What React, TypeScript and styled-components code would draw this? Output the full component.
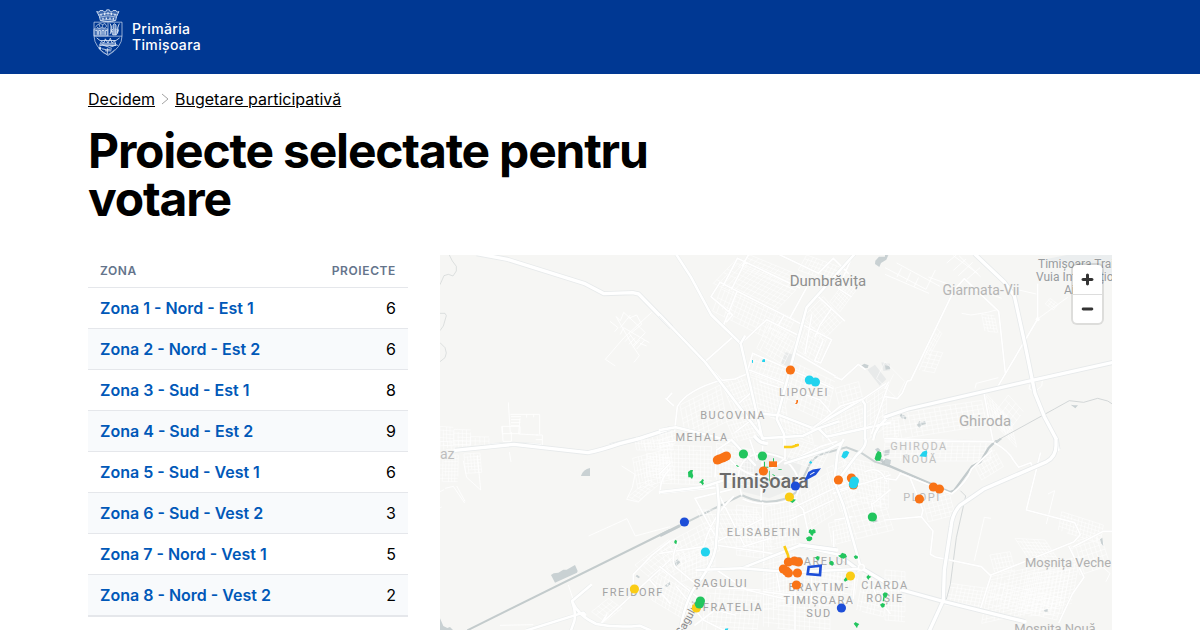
import React from "react";
import styled, { createGlobalStyle } from "styled-components";

const GlobalStyle = createGlobalStyle`
  *, *::before, *::after { box-sizing: border-box; }
  body {
    margin: 0;
    background: #fff;
    color: #000;
    font: 16px/24px Inter, "Liberation Sans", sans-serif;
  }
`;

const Header = styled.header`
  background: #003893;
  padding: 9px 0 18px;
`;

const Container = styled.div`
  width: 100%;
  max-width: 1072px;
  margin: 0 auto;
  padding: 0 24px;
`;

const Brand = styled.a`
  display: inline-flex;
  align-items: center;
  gap: 9px;
  padding-left: 5px;
  height: 47px;
  color: #fff;
  text-decoration: none;
  font-size: 14px;
  line-height: 16px;
  font-weight: 500;
  letter-spacing: 0.025em;
  vertical-align: top;
`;

const BrandName = styled.span`
  display: flex;
  flex-direction: column;
  padding-top: 8px;
`;

const Breadcrumbs = styled.nav`
  display: flex;
  align-items: center;
  gap: 4px;
  padding-top: 13px;
`;

const Crumb = styled.a`
  color: #000;
  text-decoration: underline;
`;

const Title = styled.h1`
  margin: 16px 0 32px;
  max-width: 672px;
  font-size: 48px;
  line-height: 48px;
  font-weight: 700;
  letter-spacing: -0.025em;
`;

const Content = styled.main`
  display: grid;
  grid-template-columns: 320px minmax(0, 1fr);
  gap: 32px;
  align-items: start;
  @media (max-width: 760px) {
    grid-template-columns: minmax(0, 1fr);
  }
`;

const Table = styled.table`
  width: 100%;
  border-spacing: 0;
  border-bottom: 1px solid #e5e7eb;
`;

const HeadCell = styled.th<{ $end?: boolean }>`
  padding: 8px 12px;
  border-bottom: 1px solid #e5e7eb;
  color: #64748b;
  font-size: 12px;
  line-height: 16px;
  font-weight: 600;
  letter-spacing: 0.05em;
  text-transform: uppercase;
  text-align: ${(p) => (p.$end ? "right" : "left")};
`;

const Row = styled.tr`
  &:nth-child(even) { background: #f8fafc; }
`;

const Cell = styled.td<{ $end?: boolean }>`
  padding: 8px 12px;
  border-bottom: 1px solid #e5e7eb;
  text-align: ${(p) => (p.$end ? "right" : "left")};
`;

const ZoneLink = styled.a`
  color: #0058b8;
  font-weight: 600;
  text-decoration: none;
`;

const MapFrame = styled.section`
  position: relative;
  overflow: hidden;
  background: #f6f6f4;
`;

const MapDrawing = styled.svg`
  display: block;
  width: 100%;
  height: auto;
`;

const ZoomControls = styled.div`
  position: absolute;
  top: 10px;
  right: 10px;
  display: flex;
  flex-direction: column;
  border-radius: 4px;
  background: #fff;
  box-shadow: 0 0 0 2px rgba(0, 0, 0, 0.1);
`;

const ZoomButton = styled.button`
  width: 29px;
  height: 29px;
  padding: 0;
  border: 0;
  background: transparent;
  cursor: pointer;
  & + & { border-top: 1px solid #ddd; }
  svg { display: block; width: 100%; height: 100%; }
`;

const Crest = () => (
  <svg width="30" height="47" viewBox="40 28 90 140" fill="none" stroke="#dce7f6" strokeWidth="2.5" aria-hidden="true">
    <path d="M51 35l7 2 3-5h9l3 4h5l3-6h8l3 6h5l3-4h9l3 5 6-2-7 14-3 13-12 3H74l-12-3-3-13z" fill="#88a6d3" fillOpacity=".45" />
    <path d="M55 46q30-10 59 0M58 52q27-8 53 0M62 62q23-6 45 0" strokeWidth="2" />
    <path d="M64 42v6M75 39v7M85 37v7M95 39v7M106 42v6M70 54v6M80 53v6M91 53v6M101 54v6" strokeWidth="4" />
    <path d="M43 67h84v42q0 33-42 58Q44 142 43 109z" strokeWidth="2" />
    <path d="M43 109h84M85 68v41" strokeWidth="2" />
    <path d="M43 87h41v21H43z" fill="#88a6d3" fillOpacity=".5" strokeWidth="2" />
    <path d="M47 92h6v13M57 105V92h6v13M67 105V92h6v13M77 105V92h6" />
    <path d="M47 83l6-8 8-4 8 3 7-3 5 8-6 6-9-2-8 3-6-4M58 73l3 9M70 74l-3 9" strokeWidth="2" />
    <path d="M91 71l5 10v10l-5 12M119 71l-5 12v18M100 76q5-9 9 0v10l7 7-6 12H99l-4-12 6-7z" fill="#c5d5ec" fillOpacity=".5" />
    <path d="M103 86v20M108 86v20M92 90l8 7M118 89l-8 8" />
    <path d="M51 114l10 8h48l11-8M60 135l5-10 8 4 4-12 8 13 7-15 5 15 8-7 4 14zM57 139q12-7 22 0t22 0 14-1M67 147q12 5 30 0M83 145v19M76 153h19" strokeWidth="2.5" />
    <path d="M65 130h43l-3 7H69z" fill="#c5d5ec" fillOpacity=".5" strokeWidth="1.5" />
    <circle cx="61" cy="145" r="3" fill="#dce7f6" />
    <path d="M60 149q10 12 23 15M105 149q-9 11-21 15" strokeWidth="1.5" />
  </svg>
);

/* Map sheets are digitised at three units to the pixel. */
type SheetProps = { x: number; y: number; children: React.ReactNode };
const Sheet = ({ x, y, children }: SheetProps) => (
  <g transform={`translate(${x} ${y}) scale(0.333333)`}>{children}</g>
);

const roadStyle = {
  major: { casing: 15, fill: 10, edge: "#e7eaeb" },
  main: { casing: 11, fill: 7.5, edge: "#ebeeee" },
  minor: { casing: 6.5, fill: 5, edge: "#f0f0ef" },
};

const Road = ({ d, kind = "minor" }: { d: string; kind?: keyof typeof roadStyle }) => (
  <g fill="none" strokeLinejoin="round">
    <path d={d} stroke={roadStyle[kind].edge} strokeWidth={roadStyle[kind].casing} />
    <path d={d} stroke="#fff" strokeWidth={roadStyle[kind].fill} strokeLinecap="round" />
  </g>
);

const Lanes = ({ d }: { d: string }) => <path d={d} fill="none" stroke="#fff" strokeWidth="2.6" />;

type Block = [number, number, number, number, number, number, number, number];

/* A block of streets: origin, two edge vectors and the number of streets along each. */
const Streets = ({ blocks }: { blocks: Block[] }) => {
  const d = blocks
    .map(([x, y, ux, uy, vx, vy, n, m]) => {
      const parts: string[] = [];
      for (let i = 0; i <= n; i++) {
        const a = i % 3 === 1 ? 0.15 : 0;
        const b = i % 4 === 2 ? 0.8 : 1;
        const px = x + (ux * i) / n;
        const py = y + (uy * i) / n;
        parts.push(`M${px + vx * a} ${py + vy * a}L${px + vx * b} ${py + vy * b}`);
      }
      for (let j = 0; j <= m; j++) {
        const a = j % 3 === 2 ? 0.2 : 0;
        const px = x + (vx * j) / m;
        const py = y + (vy * j) / m;
        parts.push(`M${px + ux * a} ${py + uy * a}l${ux * (1 - a)} ${uy * (1 - a)}`);
      }
      return parts.join("");
    })
    .join("");
  return <path d={d} fill="none" stroke="#fff" strokeWidth="2.2" opacity=".75" />;
};

const WATER = "#c9d1d3";

const BaseMap = () => (
  <g>
    <Sheet x={0} y={0}>
      <g fill="none" stroke="#cfd3d3" strokeWidth="2">
        <path d="M28 0l9 18 12 16v14l-10 15-14-5-13 4L0 89M0 175h15l4 7-9 31-10 14M0 263l15 15 4 16-4 14-15 12" />
      </g>
      <Lanes d="M551 172l50 46 15 15-38 39-50-88M510 199l24 19-10 12M551 172l-10 25-12-12M571 180l-30 38M566 190l24-10 15 28-30 25M635 172l-84 77-55 64 30 20M578 272l20 30-16 20M541 238l10-20 77 45M555 260l18-20M567 268l18-20M579 277l20-22M590 282l24-27M600 265l20 8M566 233l24 32" />
      <Lanes d="M205 442l6 94M211 478h88v60M213 485h30M213 494h28M213 503h28M213 512h25M185 514h55v22h-53zM187 516l2 43h25v-28M240 490l-4 47 58 3M287 540h20v30M287 554h20M260 478v10M281 478v9" />
      <Streets blocks={[[0, 514, 40, 3, 0, 56, 4, 5], [42, 523, 50, 2, 0, 46, 4, 4], [92, 545, 55, 1, 0, 25, 4, 2], [606, 545, 84, -23, 12, 45, 6, 2]]} />
      <Road d="M680 432l15-17M678 431l22 20" />
      <Road kind="major" d="M110-4L202 13l230 72 60 31 86-3 18 4 98 100" />
      <Road kind="major" d="M510 572l90-22 90-29" />
      <Road kind="main" d="M150 570q65-6 150 0" />
    </Sheet>

    <Sheet x={220} y={0}>
      <path d="M374 290l28 10-12 38-28-8z" fill="#e8eaea" />
      <path d="M657 5h17l11-5-6 14-16 10-5 12-13-9 1-10z" fill={WATER} />
      <path d="M603 332l10-6 13 5-3 8-15 1zM678 333l12-3v10l-8 2z" fill={WATER} />
      <path d="M622 344l23-15 34 44-20 19zM664 322l26 4v20l-20 2z" fill="#e8eaea" />
      <Streets
        blocks={[
          [232, 10, 185, 85, -72, 75, 16, 7],
          [270, 0, 170, 70, -35, 35, 13, 4],
          [440, 0, 110, 40, -25, 45, 11, 4],
          [188, 88, 160, 80, -30, 80, 14, 6],
          [355, 170, 50, 23, -32, 60, 5, 5],
          [490, 125, 60, 70, -60, 60, 8, 6],
          [432, 200, 70, 45, -30, 80, 8, 6],
          [330, 200, 80, 50, -40, 80, 8, 6],
          [570, 60, 30, 30, -60, 80, 5, 9],
          [278, 300, 105, 35, -20, 55, 9, 4],
          [265, 350, 100, 35, 20, 120, 9, 8],
          [395, 320, 130, 60, -30, 120, 10, 8],
          [60, 450, 120, -60, 20, 110, 9, 8],
          [185, 385, 65, -25, 45, 110, 7, 8],
          [200, 500, 80, -20, 25, 60, 9, 5],
          [480, 500, 125, -50, 10, 60, 10, 5],
          [360, 480, 90, 35, 10, 50, 8, 4],
          [620, 430, 60, -40, 0, 125, 5, 9],
          [525, 400, 70, -20, 15, 60, 5, 4],
          [0, 528, 45, -12, 0, 50, 5, 4],
        ]}
      />
      <Road d="M232 10l186 88M232 10l-42 81M255 22l-40 80M230 112l-40 100M180 82l-27 43 65 55-18 20M180 82l335 172-33 70-18-7 24-58M370 185l-13 22M440 97l-50 92M265 0l-18 32M350-5l125 60M475 55l45-45M520 10l45 45M475 125l78 72M570 20l-35 80 38 25M515 160l-35 50-15 35M220 245L135 320M245 264l75-70 95 47M410 296l135 78M455 180l-20 115M278 295l240 105M278 295l-18 62-35 15M260 342l125 48M300 380l70 22" />
      <Road d="M135 320l50 55q-105 30-133 80l-8 70M225 372l-45 5M300 475l-72 55M270 416l-35 30M545 374l50-46 20 15M480 520l40 50M515 475l-35-40-80-30M545 374l-20-8" />
      <Road kind="main" d="M48-3l44 68 62 115 88 85 66 290M0 180l135 141 176 230M585-4L440 157l-90 335 22 45v33M0 525l47-8 170 42M310 477l50 4 102 40M310 550l120-8 45-22 60-20M455 520l150-87 10 15v120M475 520l25 25 190-42M640 553q5-36 50-72" />
      <Road d="M678 385L607 433l-65 20-85 68M635 535l50-145" />
      <Road kind="main" d="M242 265l12-20" />
    </Sheet>

    <Sheet x={445} y={0}>
      <path d="M550-2l110 40 25 4V0zM455 18h60l80 40h90V42L555-2z" fill="#ebeeef" />
      <path d="M0 331l13 3 3 7-14 3zM44 480l5-4 15 9-1 8-15-4zM96 510l7-12 8 4 10-5 2 10-13 4-7 8zM557 449l10 2 12 0-8 9zM330 561l15-12 7 2-18 15z" fill={WATER} />
      <path d="M0 0h10L0 8z" fill={WATER} />
      <Lanes d="M0 38l123 65 28-58M0 58l132 57M35 24l130 70M50 38l-14 28M77 52l-13 29M101 67l-14 29M130 66l70 25M205 2l75 55M222 2l65 64M185 24l30-25M205 46l38-34M220 62l43-40M240 78l45-40M270 100l80 30M380 100l78 18M230 175l28 5 50-8 28-8" />
      <Streets blocks={[[290, 178, 38, 4, 10, 50, 4, 5], [495, 130, 24, 18, -14, 17, 3, 3], [155, 220, 15, 15, -42, 78, 3, 6], [128, 285, 45, 8, -25, 60, 3, 5], [0, 320, 60, 60, -25, 50, 2, 1], [20, 478, 270, -42, 15, 75, 17, 6], [300, 412, 75, 80, 20, 85, 7, 8], [370, 420, 45, 50, -50, 65, 4, 5], [-5, 500, 45, -5, 0, 50, 4, 5]]} />
      <Road d="M0 425l37 6 15-17 15-36 10-2 130-270 31-35 103 98 20 185M340 392l118-200V88M0 400l10-18" />
      <Lanes d="M458 192l90-65M270 400l4-15 66-17M435 388l-3 13 10 5M472 378l-2 15-14 12" />
      <Road d="M296 410l14 75 15 78M0 551l323 9" />
      <path d="M690 452l-22-14-30-8-42 12-43-5-45 25-182 100" fill="none" stroke="#cbd0d1" strokeWidth="2.5" />
      <Road kind="major" d="M0 486l70-24 372-86 243-54M268-4l90 85 30 42 32 145 30 147 28 70 36 68 5 30" />
      <circle cx="458" cy="193" r="6" fill="#fff" />
    </Sheet>

    <Sheet x={0} y={185}>
      <path d="M424 105q6-16 26-21v24h-27zM333 405l8-5 14-2 15-9h10l25-14 8 18-2 5-66 30z" fill={WATER} />
      <path d="M0 535l10 23 12 6 8-3 10 10H0M587 409l4-5 9 7-4 4zM676 436l14-10v7l-9 8z" fill={WATER} />
      <Streets blocks={[[0, 5, 90, -5, 0, 25, 8, 2], [0, 45, 55, 0, -2, 80, 6, 8], [72, 42, 48, -3, 5, 58, 5, 6], [585, 0, 110, 0, 5, 30, 12, 3], [578, 55, 112, -30, 15, 90, 13, 7], [565, 170, 60, -50, 30, 15, 6, 3], [585, 375, 100, -75, 65, 55, 9, 5], [455, 515, 50, -40, 40, 30, 5, 3], [620, 40, 68, 5, 0, 70, 7, 8]]} />
      <Lanes d="M70 62l10 50 42 38-10-105M15 145l25-6 34 50M50 138l25 46M0 155l12-6M0 203l5-2M208 36l5 30M446 288l115-52 25 52 104-28M545 78l40 25-8 40-17 35 35 8 35-34M385 435l15 45M180 556l100-2" />
      <path d="M82 571L690 270" stroke="#c3cbcc" strokeWidth="6" />
      <Road d="M660 160l30-7M660 160q0-47 30-73M690 303l-55 43-55 57v28M690 360L480 554M630 420l60 70M480 555l20-30" />
      <Road kind="major" d="M45 31l177-18 222 25q40-8 95-27l50-13" />
      <Road kind="main" d="M453 435l-57 48q13 35 7 60l-10 28M396 483q18 44 73 69 60 12 130 5l30 13M260 571l170-53 5 6" />
    </Sheet>

    <Sheet x={220} y={185}>
      <path d="M250 55l60-25 70 20 45 25-22 70-75 30-80-20-15-45z" fill="#eeefee" />
      <path d="M60 257L190 192l55-27q35 18 75 20 58 0 90-30l44-92 25-19 80-22 45 17 40 26 46 14" fill="none" stroke="#cbd2d3" strokeWidth="6" />
      <path d="M0 287l60-30M645 52l45 20" stroke="#c3cbcd" strokeWidth="9" />
      <path d="M645 28l9-5 8 8-8 9zM670 32l20-4v15l-18 6zM15 437l10-9 6 5-10 9zM38 368l15-10 8 9-15 14zM638 239l10-5 5 10-13 5zM0 450h7l-4 10z" fill={WATER} />
      <Streets
        blocks={[
          [0, 15, 155, 5, 0, 115, 14, 9],
          [170, 10, 110, 20, 0, 110, 12, 8],
          [110, 210, 180, 0, 55, 110, 14, 8],
          [230, 195, 80, 10, 0, 150, 8, 10],
          [315, 200, 90, -20, 10, 130, 10, 9],
          [420, 150, 80, -50, 25, 120, 8, 7],
          [500, 85, 55, -25, 40, 130, 6, 9],
          [550, 50, 90, 20, 25, 130, 9, 9],
          [540, 190, 125, -30, 35, 110, 8, 7],
          [0, 320, 150, -80, 30, 90, 11, 6],
          [65, 345, 100, -35, 0, 80, 9, 6],
          [0, 390, 100, 60, -25, 90, 10, 7],
          [140, 445, 165, 10, -15, 125, 12, 9],
          [310, 360, 90, -20, 0, 150, 9, 10],
          [400, 345, 145, 25, 0, 95, 13, 7],
          [310, 450, 200, 20, 0, 110, 13, 8],
          [610, 400, 80, 20, -20, 110, 8, 8],
          [500, 390, 95, 15, -10, 60, 8, 4],
          [505, 250, 60, -15, 12, 65, 6, 5],
          [410, 0, 100, 30, -30, 60, 9, 5],
          [650, 90, 35, 5, 0, 110, 3, 9],
        ]}
      />
      <Road d="M0 160q90-10 175-18M105 175l110-27M105 175l70 130M0 340l130-20M170 305l135-67M130 320q25-90 90-150M245 165q-25-80 15-110t110 0q65 55 40 112M180 170l75 150M308 188l3 180M308 20l-5 160M400 175l30 35 15 70M395 205l160-75M390 240l130-60M520 160l170-55M525 240l50-10M520 275l2 55" />
      <Road d="M615 95q45-20 65 30M635 190l5 40M640 190l50-40M165 315l170 25M250 320l80-25M170 390l90 60 130 30M55 305q-25 50-10 75l60 50M0 380l110 90M50 440l80 100 60 30M130 440l170 10M105 555l60-45 60 15M405 430v140M310 455l270 35M350 400l10 55M455 415v70M580 475l5-60M620 390l30 80 40 50M535 150l75-20" />
      <Road d="M190 30q60 100 180 80M270 0l20 60M375 0v55l-40 30M380 70l100-50 50-15M215 0l-45 30-5 80M0 100l30-30M0 10l60-10" />
      <Road kind="main" d="M0 156l130-15 60-20M375 70l130-42 40-20M525 130l25 65 53 190M125 415q35-50 42-90l10-130-5-60M110 390l135-5 170-67 115 25 60 40M215 0l70 75M550 0q-20 35-20 60l-8 70M615-5q10 20-25 50l-60 80" />
      <Road d="M250 178q70 30 160-4" />
      <Road kind="major" d="M602 383l88 52M535 345l60 45" />
      <Road kind="main" d="M125 415q-45 45-65 155M245 385l155 12 195-10" />
      <Road kind="major" d="M285-10q15 20 35 20M530 330l-110-15" />
      <circle cx="604" cy="382" r="9" fill="#f6f6f4" stroke="#fff" strokeWidth="4" />
    </Sheet>

    <Sheet x={445} y={185}>
      <Streets
        blocks={[
          [0, 8, 320, 0, -5, 55, 19, 5],
          [265, 70, 65, -40, 25, 50, 7, 4],
          [110, 170, 80, -20, 20, 75, 6, 6],
          [530, 215, 125, 40, -10, 55, 12, 5],
          [390, 295, 90, 5, 40, 60, 8, 6],
          [315, 345, 60, -10, 15, 55, 6, 4],
          [315, 410, 270, -60, -25, 140, 22, 13],
          [320, 425, 215, 50, -20, 65, 16, 6],
          [195, 430, 110, 15, -15, 65, 9, 6],
          [555, 310, 90, -30, 30, 95, 7, 6],
          [0, 390, 60, 5, 0, 150, 6, 10],
          [430, 400, 125, -10, -25, 130, 11, 8],
        ]}
      />
      <Lanes d="M318 235l-20-3-30 130M484 252l25-100-20 10M635 365l40 35-12 25" />
      <path d="M226 152l16 16-28 125-18 140-12 45" stroke="#cdd1d2" strokeWidth="2.5" fill="none" />
      <path d="M-10 68l205 88 12-4 54-73 25-13 25-42 16-16" fill="none" stroke="#c2cacc" strokeWidth="7" />
      <path d="M0 55l18 5-3 14-15-3M328 0h17l-7 7zM645 298l7-5 3 25-6-7zM477 510l11-3v8h-9z" fill={WATER} />
      <path d="M55 44l12-3 5 10-17 5z" fill="#dfe3e4" />
      <Road d="M45 100l155 62q45-35 60-75l60-55M76 115l38 95-5 20 35 43-8 70 15 8 138 29 27 26 250-100 20-22-17-36-145-38 42-170M318 408l-10 30-22 70M552 320l45 92-35 50-40 85M0 240l110-10M330 10q40 22 55 50l16 22 36-14 6 14M0 115l33 5 14-20M0 3l325 2M565 320l90-46h30" />
      <Road kind="major" d="M513-3v20q0 32-28 48l-190 83-70 48q-23 24-27 65l-20 130-3 90-42 92M50 450l120 33 250 62" />
    </Sheet>
  </g>
);

type LabelData = { x: number; y: number; size: number; color: string; text: string; spaced?: boolean; bold?: boolean; start?: boolean };
const labels: LabelData[] = [
  { x: 388, y: 31, size: 15, color: "#8f8f8f", text: "Dumbrăvița" },
  { x: 541, y: 40, size: 14, color: "#b5b5b5", text: "Giarmata-Vii" },
  { x: 545, y: 171, size: 15, color: "#b0b0b0", text: "Ghiroda" },
  { x: 364, y: 141, size: 11, color: "#a8a8a8", text: "LIPOVEI", spaced: true },
  { x: 293, y: 164, size: 11, color: "#a3a3a3", text: "BUCOVINA", spaced: true },
  { x: 262, y: 186, size: 11, color: "#a3a3a3", text: "MEHALA", spaced: true },
  { x: 479, y: 195, size: 11, color: "#c0c0c0", text: "GHIRODA", spaced: true },
  { x: 480, y: 208, size: 11, color: "#c0c0c0", text: "NOUĂ", spaced: true },
  { x: 482, y: 246, size: 11, color: "#bcbcbc", text: "PLOPI", spaced: true },
  { x: 324, y: 281, size: 11, color: "#a8a8a8", text: "ELISABETIN", spaced: true },
  { x: 382, y: 310, size: 11, color: "#a8a8a8", text: "CARELUI", spaced: true },
  { x: 281, y: 332, size: 11, color: "#a3a3a3", text: "ȘAGULUI", spaced: true },
  { x: 293, y: 356, size: 11, color: "#a3a3a3", text: "FRATELIA", spaced: true },
  { x: 193, y: 341, size: 11, color: "#a3a3a3", text: "FREIDORF", spaced: true },
  { x: 379, y: 336, size: 11, color: "#a3a3a3", text: "BRAYTIM-", spaced: true },
  { x: 379, y: 349, size: 11, color: "#a3a3a3", text: "TIMIȘOARA", spaced: true },
  { x: 379, y: 362, size: 11, color: "#a3a3a3", text: "SUD", spaced: true },
  { x: 445, y: 334, size: 11, color: "#a8a8a8", text: "CIARDA", spaced: true },
  { x: 445, y: 347, size: 11, color: "#a8a8a8", text: "ROȘIE", spaced: true },
  { x: 0, y: 204, size: 14, color: "#bdbdbd", text: "az", start: true },
  { x: 628, y: 312, size: 13, color: "#b0b0b0", text: "Moșnița Veche" },
  { x: 615, y: 378, size: 13, color: "#b0b0b0", text: "Moșnița Nouă" },
  { x: 598, y: 13, size: 12, color: "#989c9f", text: "Timișoara Traian", start: true },
  { x: 596, y: 26, size: 12, color: "#989c9f", text: "Vuia Internațional", start: true },
  { x: 624, y: 39, size: 12, color: "#989c9f", text: "Airport", start: true },
  { x: 324, y: 233, size: 20, color: "#6b6b6b", text: "Timișoara", bold: true },
];

const Label = ({ l }: { l: LabelData }) => (
  <text
    x={l.x}
    y={l.y}
    fontSize={l.size}
    fill={l.color}
    fontFamily='Roboto, "Liberation Sans", sans-serif'
    fontWeight={l.bold ? 500 : 400}
    textAnchor={l.start ? "start" : "middle"}
    letterSpacing={l.spaced ? 1.5 : 0}
    stroke="#f6f6f4"
    strokeWidth="1"
    paintOrder="stroke"
  >
    {l.text}
  </text>
);

const ORANGE = "#f97316";
const CYAN = "#22d3ee";
const GREEN = "#22c55e";
const BLUE = "#1d4ed8";
const YELLOW = "#facc15";

/* Outlined project areas, in the units of the central map sheets. */
const Areas = () => (
  <g>
    <Sheet x={220} y={0}>
      <path d="M276 315h3v8l-3 1zM306 318l3-5h6v8h-8z" fill={CYAN} />
      <path d="M409 435h5v6l-3 6-6-1 4-4z" fill={ORANGE} />
      <path d="M405 567h12v3h-12z" fill={YELLOW} />
    </Sheet>
    <Sheet x={220} y={185}>
      <path d="M372 21l24 0 20-7" fill="none" stroke={YELLOW} strokeWidth="8" />
      <path d="M373 318l11 27 2 15" fill="none" stroke={YELLOW} strokeWidth="8" />
      <g fill={GREEN}>
        <path d="M84 96l8-6h7l-2 8 3 10-4 9-5-5h-6zM117 127l6-4 4-6 5 3-3 6 3 4-4 6-5-7zM43 303l4-4 4 4-2 10-6-4zM648 42l6-9 9 4 2 12-5 13h-12l-4-6zM447 270l5-3 3 4 6-4 5 3 1 8-7 3-1 6-6-1-3-6-4-1zM438 294l9-5 9 2 1 7-7 6-8-1zM534 347l8-3 4-6 11 4 4 8-10 6-9-3zM507 369l5-7 6 2 4 5-4 8-5-1zM581 350l5-4 7 2 1 7-8 2zM551 420l7-9 5 2v8l-8 4zM619 411l6-7 3 4 6 2-6 5-3 5zM668 462l6-5 8 2-1 10-7 3-2 12h-4l2-15zM660 494l7-5 8 3-2 9-7 2zM581 551l6-5 4 3 7 3-5 6-2 7-4-6zM465 353l7-5 7 2-1 8-6 3zM390 184l8-7 10 2-6 6-5 4z" />
        <path d="M312 65h3v22h-3zM308 80h17v3h-17zM339 55h3v12h-3zM343 71h7v2h-7zM355 88h10v2h-10zM338 102l8 5-2 2-7-5zM327 92h2v32h-2zM230 75l7 4-3 2-6-4z" />
      </g>
      <path d="M544 50l6-15 10-3 8 5-7 14-8 5zM447 67l5-4 5 4-4 5zM195 566l10-1-2 6h-8z" fill={CYAN} />
      <path d="M327 64h24v17h-24z" fill={ORANGE} />
      <path d="M441 115l7-16 12-7 14-2-9 12z" fill="none" stroke={BLUE} strokeWidth="8" />
      <path d="M446 381l36-4-2 28-37-3z" fill="none" stroke={BLUE} strokeWidth="8" />
    </Sheet>
    <Sheet x={445} y={185}>
      <path d="M103 49l10-14 12-4 2 7-3 13z" fill={CYAN} />
      <path d="M0 461l7-2v8l-7 8z" fill={GREEN} />
    </Sheet>
  </g>
);

const pins: [number, number, string][] = [
  [350, 115, ORANGE], [369, 125, CYAN], [375, 127, CYAN],
  [277, 205, ORANGE], [279, 204, ORANGE], [282, 203, ORANGE], [284, 202, ORANGE], [286, 201, ORANGE],
  [303, 199, GREEN], [322, 201, GREEN], [323, 216, ORANGE], [355, 231, BLUE], [349, 242, YELLOW],
  [398, 225, ORANGE], [411, 223, ORANGE], [413, 230, ORANGE], [414, 226, CYAN], [413, 229, CYAN],
  [432, 262, GREEN], [244, 267, BLUE], [265, 297, CYAN], [194, 334, YELLOW],
  [348, 307, ORANGE], [354, 306, ORANGE], [358, 307, ORANGE], [343, 314, ORANGE], [346, 316, ORANGE],
  [348, 318, ORANGE], [357, 318, ORANGE], [356, 330, ORANGE], [410, 321, YELLOW], [401, 353, BLUE],
  [256, 353, YELLOW], [259, 349, GREEN], [260, 346, GREEN],
  [493, 232, ORANGE], [499, 234, ORANGE], [479, 244, ORANGE],
];

const zones: [string, number][] = [
  ["Zona 1 - Nord - Est 1", 6],
  ["Zona 2 - Nord - Est 2", 6],
  ["Zona 3 - Sud - Est 1", 8],
  ["Zona 4 - Sud - Est 2", 9],
  ["Zona 5 - Sud - Vest 1", 6],
  ["Zona 6 - Sud - Vest 2", 3],
  ["Zona 7 - Nord - Vest 1", 5],
  ["Zona 8 - Nord - Vest 2", 2],
];

export default function App() {
  return (
    <>
      <GlobalStyle />
      <Header>
        <Container>
          <Brand href="#">
            <Crest />
            <BrandName>
              <span>Primăria</span>
              <span>Timișoara</span>
            </BrandName>
          </Brand>
        </Container>
      </Header>
      <Container>
        <Breadcrumbs aria-label="Navigare">
          <Crumb href="#">Decidem</Crumb>
          <svg width="12" height="16" viewBox="0 0 12 16" fill="none" stroke="#a3a3a3" strokeWidth="1" aria-hidden="true">
            <path d="M3 3l6 5-6 5" />
          </svg>
          <Crumb href="#">Bugetare participativă</Crumb>
        </Breadcrumbs>
        <Title>Proiecte selectate pentru votare</Title>
        <Content>
          <Table>
            <thead>
              <tr>
                <HeadCell scope="col">Zona</HeadCell>
                <HeadCell scope="col" $end>Proiecte</HeadCell>
              </tr>
            </thead>
            <tbody>
              {zones.map(([name, count]) => (
                <Row key={name}>
                  <Cell><ZoneLink href="#">{name}</ZoneLink></Cell>
                  <Cell $end>{count}</Cell>
                </Row>
              ))}
            </tbody>
          </Table>
          <MapFrame aria-label="Harta proiectelor">
            <MapDrawing viewBox="0 0 672 375">
              <BaseMap />
              {labels.map((l) => <Label key={l.text} l={l} />)}
              <text
                transform="translate(242 381) rotate(-61)"
                fontSize="11"
                fill="#8a8a8a"
                fontFamily='Roboto, "Liberation Sans", sans-serif'
              >
                Șagului
              </text>
              <Areas />
              {pins.map(([x, y, color], i) => <circle key={i} cx={x + 0.4} cy={y} r="4.6" fill={color} />)}
            </MapDrawing>
            <ZoomControls>
              <ZoomButton type="button" aria-label="Mărește">
                <svg viewBox="0 0 29 29" fill="#333">
                  <path d="M14.5 8.5c-.75 0-1.5.75-1.5 1.5v3h-3c-.75 0-1.5.75-1.5 1.5S9.25 16 10 16h3v3c0 .75.75 1.5 1.5 1.5S16 19.75 16 19v-3h3c.75 0 1.5-.75 1.5-1.5S19.75 13 19 13h-3v-3c0-.75-.75-1.5-1.5-1.5z" />
                </svg>
              </ZoomButton>
              <ZoomButton type="button" aria-label="Micșorează">
                <svg viewBox="0 0 29 29" fill="#333">
                  <path d="M10 13c-.75 0-1.5.75-1.5 1.5S9.25 16 10 16h9c.75 0 1.5-.75 1.5-1.5S19.75 13 19 13h-9z" />
                </svg>
              </ZoomButton>
            </ZoomControls>
          </MapFrame>
        </Content>
      </Container>
    </>
  );
}
